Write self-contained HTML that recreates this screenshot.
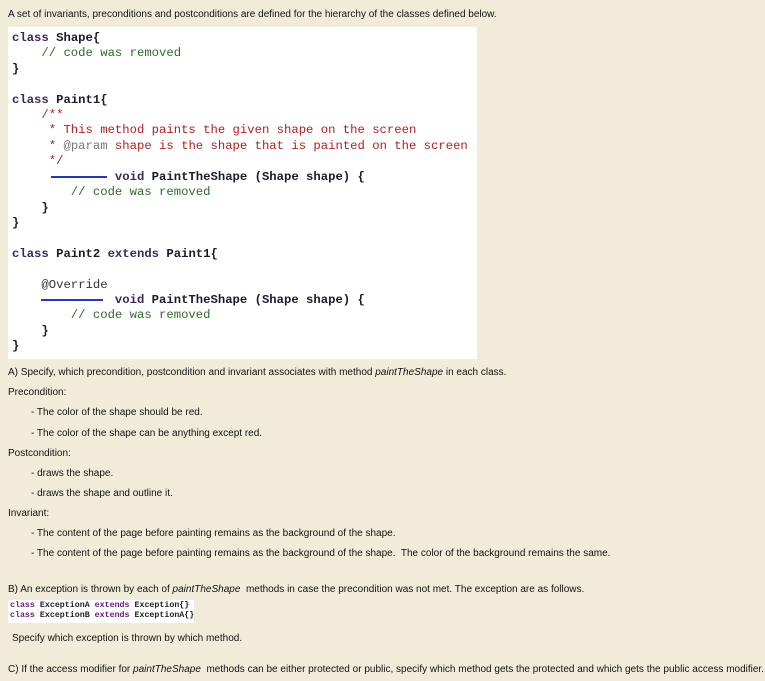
<!DOCTYPE html>
<html><head><meta charset="utf-8"><style>
body{margin:0;width:765px;height:681px;background:#f1ecda;position:relative;overflow:hidden;font-family:"Liberation Sans",sans-serif;}
.t{position:absolute;font-size:10px;color:#111;white-space:nowrap;letter-spacing:0;line-height:12px}
.code{position:absolute;left:8px;top:27px;width:469px;height:332px;background:#fff}
.c{position:absolute;font-family:"Liberation Mono",monospace;font-size:12.25px;font-weight:bold;white-space:pre;color:#1a1a2e;line-height:14px}
.k{color:#3a2a5a}.g{color:#2e6b2a;font-weight:normal}.r{color:#b02020;font-weight:normal}.a{color:#777}.n{color:#333;font-weight:normal}
.bl{position:absolute;height:2px;background:#2636b8}
.sc{position:absolute;left:8px;top:600px;width:186px;height:23px;background:#fff}
.s{position:absolute;font-family:"Liberation Mono",monospace;font-size:8.3px;font-weight:bold;white-space:pre;color:#222;line-height:10px}
.s .k{color:#6a1a7a}
</style></head><body>
<div class="t" style="left:8px;top:9px">A set of invariants, preconditions and postconditions are defined for the hierarchy of the classes defined below.</div>
<div class="code"></div>
<div class="c" style="left:12px;top:31px"><span class="k">class</span> Shape{</div>
<div class="c g" style="left:12px;top:46px">    // code was removed</div>
<div class="c" style="left:12px;top:62px">}</div>
<div class="c" style="left:12px;top:93px"><span class="k">class</span> Paint1{</div>
<div class="c r" style="left:12px;top:108px">    /**</div>
<div class="c r" style="left:12px;top:123px">     * This method paints the given shape on the screen</div>
<div class="c r" style="left:12px;top:139px">     * <span class="a">@param</span> shape is the shape that is painted on the screen</div>
<div class="c r" style="left:12px;top:154px">     */</div>
<div class="bl" style="left:51px;top:176px;width:56px"></div>
<div class="c" style="left:12px;top:170px">              <span class="k">void</span> PaintTheShape (Shape shape) {</div>
<div class="c g" style="left:12px;top:185px">        // code was removed</div>
<div class="c" style="left:12px;top:201px">    }</div>
<div class="c" style="left:12px;top:216px">}</div>
<div class="c" style="left:12px;top:247px"><span class="k">class</span> Paint2 <span class="k">extends</span> Paint1{</div>
<div class="c n" style="left:12px;top:278px">    @Override</div>
<div class="bl" style="left:41px;top:299px;width:62px"></div>
<div class="c" style="left:12px;top:293px">              <span class="k">void</span> PaintTheShape (Shape shape) {</div>
<div class="c g" style="left:12px;top:308px">        // code was removed</div>
<div class="c" style="left:12px;top:324px">    }</div>
<div class="c" style="left:12px;top:339px">}</div>
<div class="t" style="left:8px;top:367px">A) Specify, which precondition, postcondition and invariant associates with method <i>paintTheShape</i> in each class.</div>
<div class="t" style="left:8px;top:387px">Precondition:</div>
<div class="t" style="left:31px;top:407px">- The color of the shape should be red.</div>
<div class="t" style="left:31px;top:428px">- The color of the shape can be anything except red.</div>
<div class="t" style="left:8px;top:448px">Postcondition:</div>
<div class="t" style="left:31px;top:468px">- draws the shape.</div>
<div class="t" style="left:31px;top:488px">- draws the shape and outline it.</div>
<div class="t" style="left:8px;top:508px">Invariant:</div>
<div class="t" style="left:31px;top:528px">- The content of the page before painting remains as the background of the shape.</div>
<div class="t" style="left:31px;top:548px">- The content of the page before painting remains as the background of the shape.&nbsp; The color of the background remains the same.</div>
<div class="t" style="left:8px;top:584px">B) An exception is thrown by each of <i>paintTheShape</i>&nbsp; methods in case the precondition was not met. The exception are as follows.</div>
<div class="sc"></div>
<div class="s" style="left:10px;top:601px"><span class="k">class</span> ExceptionA <span class="k">extends</span> Exception{}</div>
<div class="s" style="left:10px;top:611px"><span class="k">class</span> ExceptionB <span class="k">extends</span> ExceptionA{}</div>
<div class="t" style="left:12px;top:633px">Specify which exception is thrown by which method.</div>
<div class="t" style="left:8px;top:664px">C) If the access modifier for <i>paintTheShape</i>&nbsp; methods can be either protected or public, specify which method gets the protected and which gets the public access modifier.</div>
</body></html>
